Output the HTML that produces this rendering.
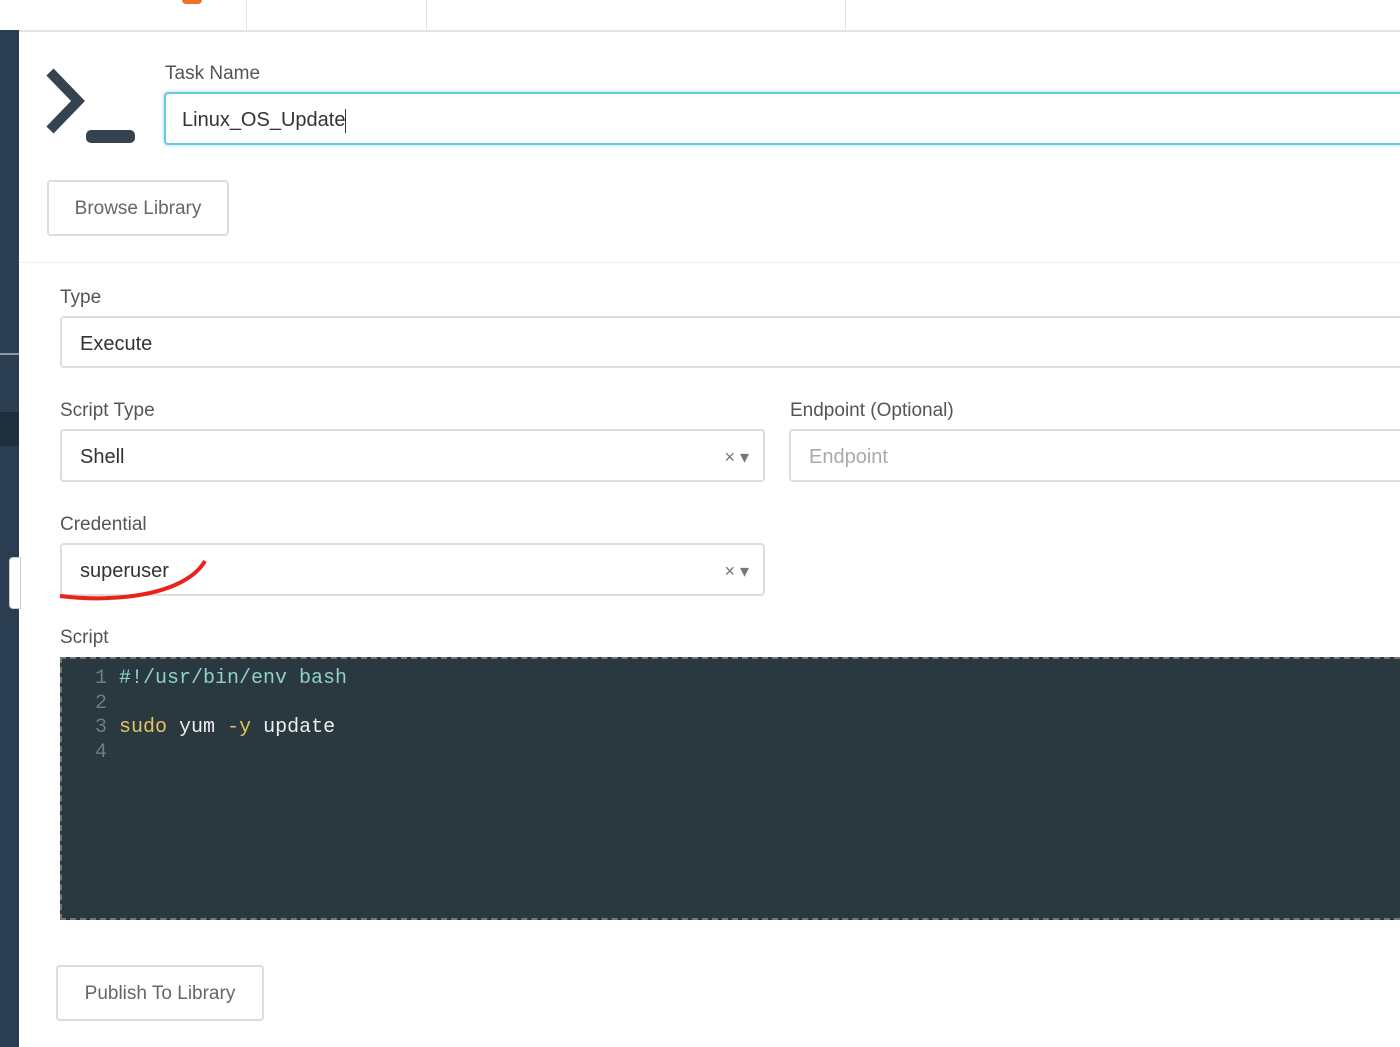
<!DOCTYPE html>
<html><head><style>
body{margin:0;width:1400px;height:1047px;overflow:hidden;background:#fff;font-family:"Liberation Sans",sans-serif;position:relative}
.a{position:absolute}
.lbl{position:absolute;font-size:19px;color:#555}
.box{position:absolute;border:2px solid #ddd;border-radius:4px;background:#fff;box-sizing:border-box;font-size:20px;color:#333;padding-left:18px;padding-top:4px;display:flex;align-items:center}
.btn{position:absolute;border:2px solid #ddd;border-radius:4px;background:#fff;box-sizing:border-box;font-size:19px;color:#666;display:flex;align-items:center;justify-content:center;padding-top:2px}
.code{position:absolute;left:60px;top:657px;width:1360px;height:263px;background:#29393f;border:2px dashed #777;box-sizing:border-box;font-family:"Liberation Mono",monospace;font-size:20px;line-height:24.5px;padding-top:8px}
.ln{display:inline-block;width:45px;text-align:right;color:#6b7d85;margin-right:12px}
</style></head><body>
<div class="a" style="left:0;top:0;width:1400px;height:30px;border-bottom:2px solid #e2e2e2"></div>
<div class="a" style="left:182px;top:0;width:20px;height:4px;background:#f07030;border-radius:0 0 4px 4px"></div>
<div class="a" style="left:246px;top:0;width:1px;height:30px;background:#e4e4e4"></div>
<div class="a" style="left:426px;top:0;width:1px;height:30px;background:#e4e4e4"></div>
<div class="a" style="left:845px;top:0;width:1px;height:30px;background:#e4e4e4"></div>
<div class="a" style="left:0;top:30px;width:19px;height:1017px;background:#2b3d50"></div>
<div class="a" style="left:0;top:353px;width:19px;height:2px;background:#8a9aaa"></div>
<div class="a" style="left:0;top:412px;width:19px;height:34px;background:#1f2e3d"></div>
<div class="a" style="left:9px;top:557px;width:10px;height:50px;background:#fff;border-radius:4px 0 0 4px;border:1px solid #ccc"></div>
<svg class="a" style="left:44px;top:66px" width="96" height="80"><path d="M6 6 L34 35 L6 64" fill="none" stroke="#34434f" stroke-width="10"/><rect x="42" y="64" width="49" height="13" rx="5" fill="#34434f"/></svg>
<div class="lbl" style="left:165px;top:63px">Task Name</div>
<div class="box" style="left:164px;top:92px;width:1250px;height:53px;border-color:#6cc8e0;box-shadow:0 0 4px #9de0f0;padding-left:16px">Linux_OS_Update<span style="border-left:1px solid #333;height:24px"></span></div>
<div class="btn" style="left:47px;top:180px;width:182px;height:56px">Browse Library</div>
<div class="a" style="left:19px;top:262px;width:1381px;height:1px;background:#eee"></div>
<div class="lbl" style="left:60px;top:287px">Type</div>
<div class="box" style="left:60px;top:316px;width:1360px;height:52px">Execute</div>
<div class="lbl" style="left:60px;top:400px">Script Type</div>
<div class="box" style="left:60px;top:429px;width:705px;height:53px">Shell<span style="position:absolute;right:14px;color:#777;font-size:18px">× ▾</span></div>
<div class="lbl" style="left:790px;top:400px">Endpoint (Optional)</div>
<div class="box" style="left:789px;top:429px;width:630px;height:53px;color:#aaa">Endpoint</div>
<div class="lbl" style="left:60px;top:514px">Credential</div>
<div class="box" style="left:60px;top:543px;width:705px;height:53px">superuser<span style="position:absolute;right:14px;color:#777;font-size:18px">× ▾</span></div>
<svg class="a" style="left:55px;top:555px" width="160" height="50"><path d="M5 41 C60 48 130 40 150 6" fill="none" stroke="#e8231b" stroke-width="4"/></svg>
<div class="lbl" style="left:60px;top:627px">Script</div>
<div class="code"><div><span class="ln">1</span><span style="color:#8fd0c8">#!/usr/bin/env bash</span></div><div><span class="ln">2</span></div><div><span class="ln">3</span><span style="color:#e6c35c">sudo</span> <span style="color:#eee">yum</span> <span style="color:#e6c35c">-y</span> <span style="color:#eee">update</span></div><div><span class="ln">4</span></div></div>
<div class="btn" style="left:56px;top:965px;width:208px;height:56px">Publish To Library</div>
</body></html>
